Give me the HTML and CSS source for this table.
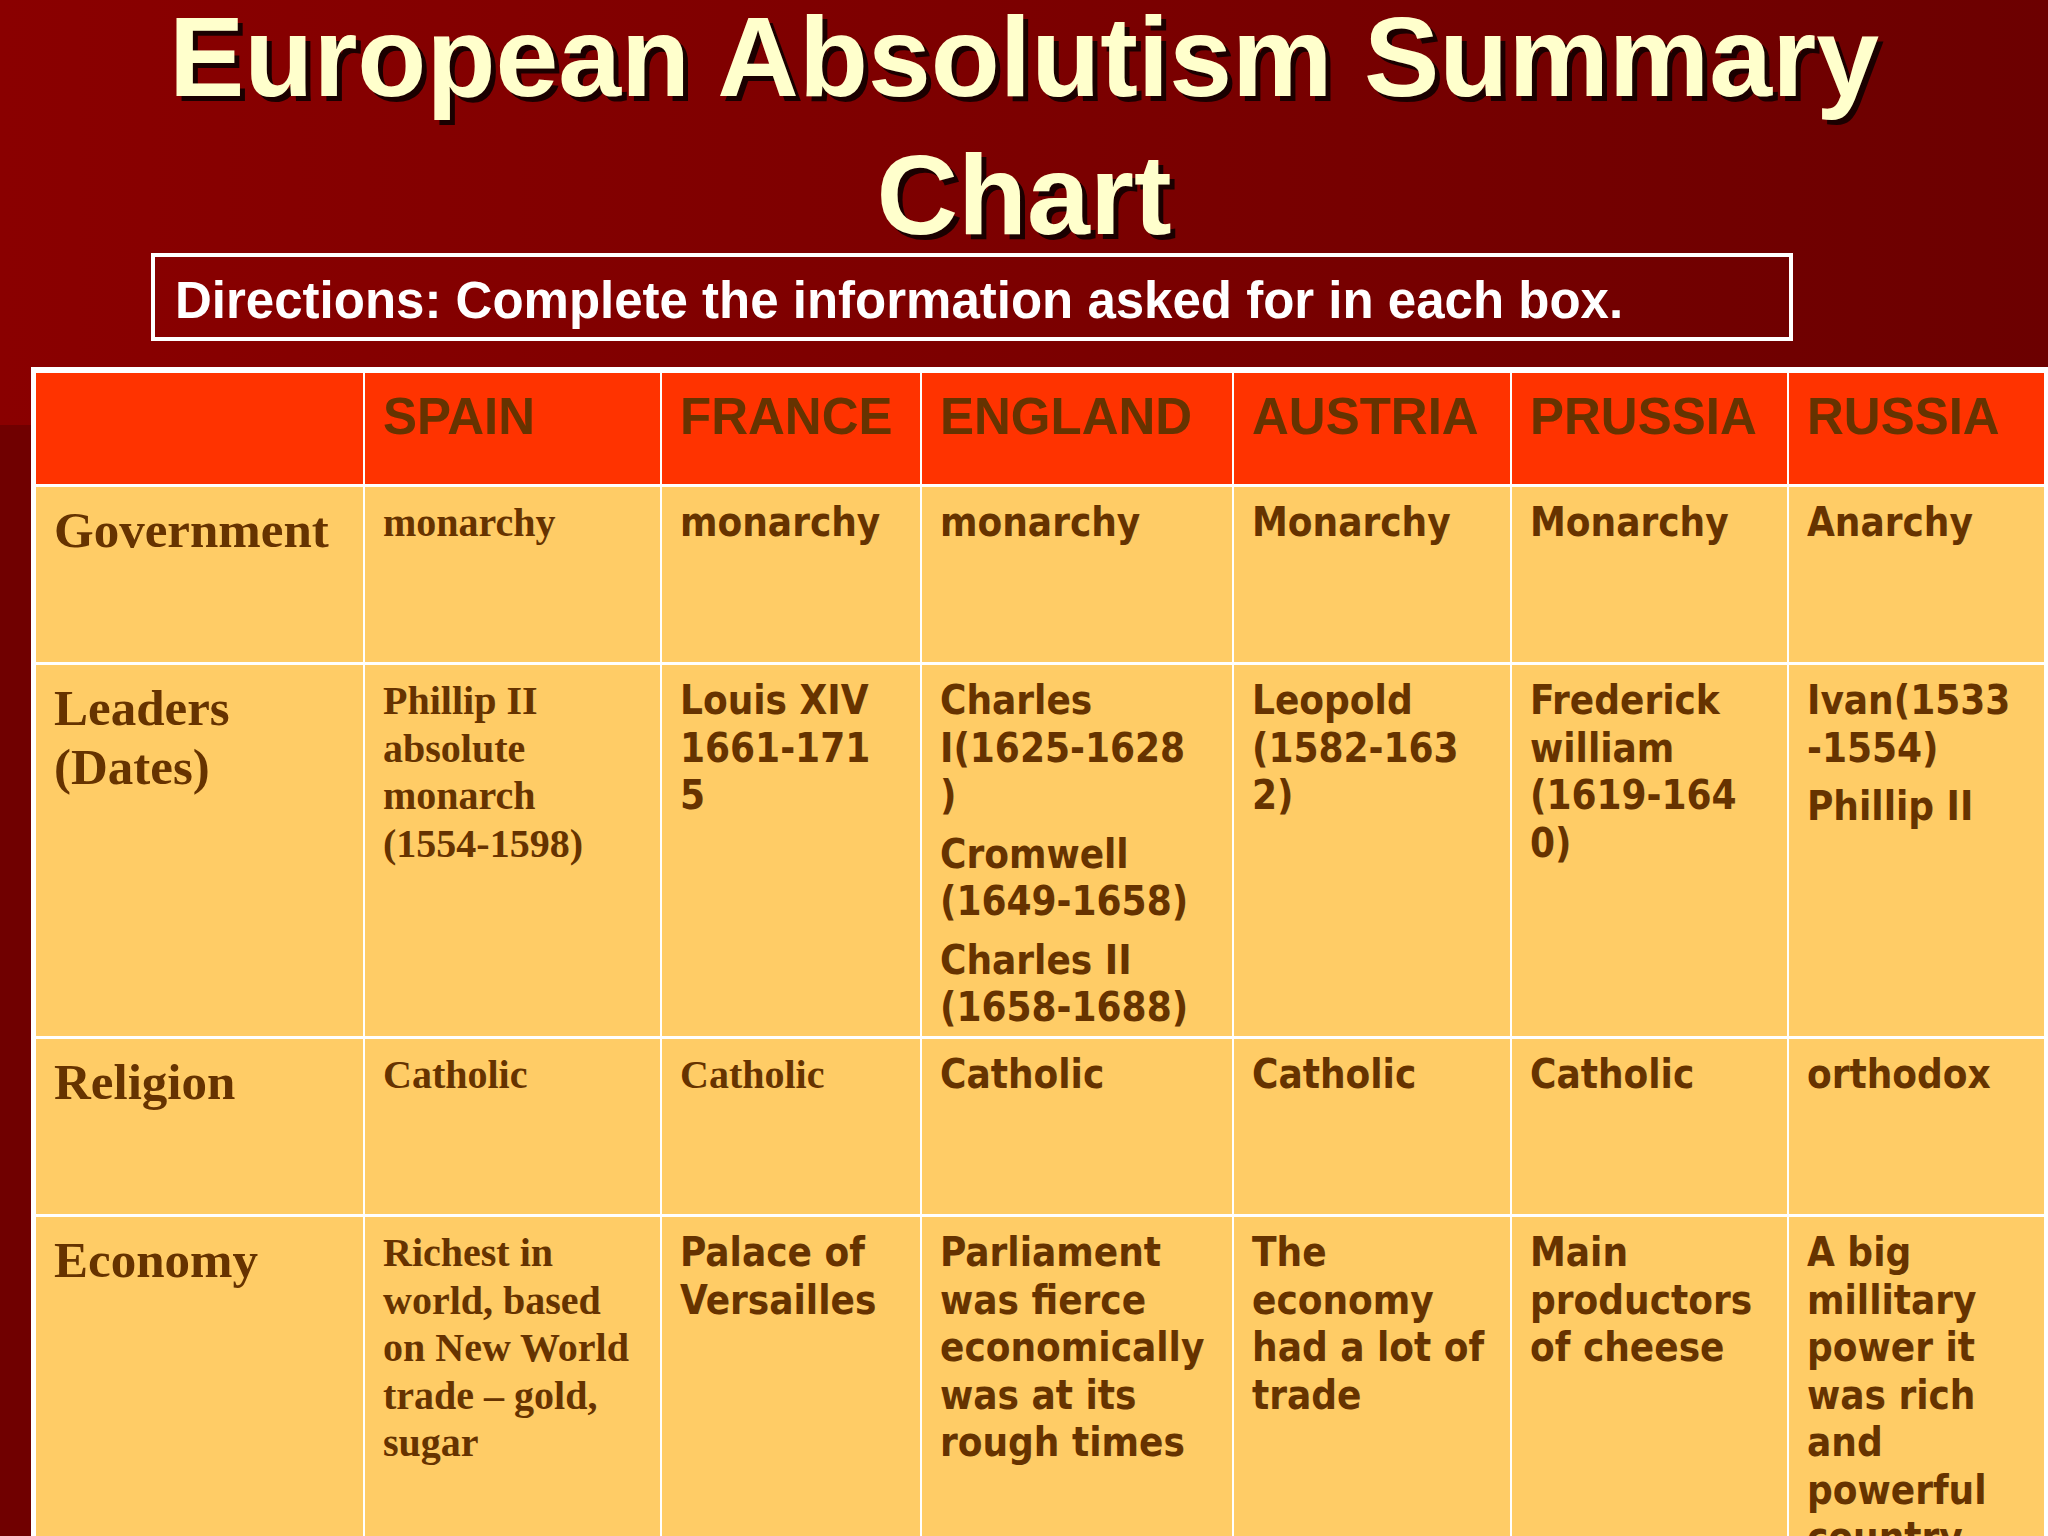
FILE: index.html
```html
<!DOCTYPE html>
<html lang="en">
<head>
<meta charset="utf-8">
<title>European Absolutism Summary Chart</title>
<link rel="stylesheet" href="styles.css">
</head>
<body>
<div class="slide">
  <h1 class="title">European Absolutism Summary<br>Chart</h1>
  <div class="directions">Directions: Complete the information asked for in each box.</div>
  <div class="chart">
    <div class="hd"></div>
    <div class="hd">SPAIN</div>
    <div class="hd">FRANCE</div>
    <div class="hd">ENGLAND</div>
    <div class="hd">AUSTRIA</div>
    <div class="hd">PRUSSIA</div>
    <div class="hd">RUSSIA</div>

    <div class="cell label">Government</div>
    <div class="cell serif">monarchy</div>
    <div class="cell sans">monarchy</div>
    <div class="cell sans">monarchy</div>
    <div class="cell sans">Monarchy</div>
    <div class="cell sans">Monarchy</div>
    <div class="cell sans">Anarchy</div>

    <div class="cell label">Leaders<br>(Dates)</div>
    <div class="cell serif">Phillip II<br>absolute<br>monarch<br>(1554-1598)</div>
    <div class="cell sans">Louis XIV<br>1661-171<br>5</div>
    <div class="cell sans"><p>Charles<br>I(1625-1628<br>)</p><p>Cromwell<br>(1649-1658)</p><p>Charles II<br>(1658-1688)</p></div>
    <div class="cell sans">Leopold<br>(1582-163<br>2)</div>
    <div class="cell sans">Frederick<br>william<br>(1619-164<br>0)</div>
    <div class="cell sans"><p>Ivan(1533<br>-1554)</p><p>Phillip II</p></div>

    <div class="cell label">Religion</div>
    <div class="cell serif">Catholic</div>
    <div class="cell serif">Catholic</div>
    <div class="cell sans">Catholic</div>
    <div class="cell sans">Catholic</div>
    <div class="cell sans">Catholic</div>
    <div class="cell sans">orthodox</div>

    <div class="cell label">Economy</div>
    <div class="cell serif">Richest in<br>world, based<br>on New World<br>trade – gold,<br>sugar</div>
    <div class="cell sans">Palace of<br>Versailles</div>
    <div class="cell sans">Parliament<br>was fierce<br>economically<br>was at its<br>rough times</div>
    <div class="cell sans">The<br>economy<br>had a lot of<br>trade</div>
    <div class="cell sans">Main<br>productors<br>of cheese</div>
    <div class="cell sans">A big<br>millitary<br>power it<br>was rich<br>and<br>powerful<br>country</div>
  </div>
</div>
</body>
</html>
```

FILE: styles.css
```css
html, body {
  margin: 0;
  padding: 0;
}

body {
  width: 2048px;
  height: 1536px;
  overflow: hidden;
  background: #7a0000;
}

.slide {
  width: 2048px;
  height: 1536px;
  overflow: hidden;
  display: flex;
  flex-direction: column;
  background:
    linear-gradient(#700000, #700000) no-repeat 0 425px / 31px 1111px,
    linear-gradient(to right, #8a0000 0%, #7c0000 50%, #6c0000 100%);
}

.slide > * {
  flex-shrink: 0;
}

.title {
  margin: -12px 0 -11px;
  font-family: "Liberation Sans", Arial, sans-serif;
  font-weight: bold;
  font-size: 113px;
  line-height: 138px;
  color: #ffffcc;
  text-align: center;
  text-shadow: 5px 5px 0 #1a0000;
}

.directions {
  box-sizing: border-box;
  margin-left: 151px;
  width: 1642px;
  height: 88px;
  padding: 14px 20px 0;
  border: 4px solid #ffffff;
  font-family: "Liberation Sans", Arial, sans-serif;
  font-weight: bold;
  font-size: 51px;
  color: #ffffff;
  white-space: nowrap;
}

.chart {
  margin: 26px 0 0 31px;
  align-self: flex-start;
  display: grid;
  grid-template-columns: 327px 295px 258px 310px 276px 275px 255px;
  grid-template-rows: 111px 175px 371px 175px 400px;
  gap: 3px 2px;
  padding: 6px 4px 0 5px;
  background: #ffffff;
}

.hd {
  background: #ff3300;
  color: #663300;
  font-family: "Liberation Sans", Arial, sans-serif;
  font-weight: bold;
  font-size: 51px;
  padding: 14px 18px 0;
  white-space: nowrap;
}

.cell {
  background: #ffcc66;
  color: #663300;
  font-weight: bold;
  font-size: 40px;
  line-height: 47.5px;
  padding: 12px 18px 0;
  white-space: nowrap;
  overflow: hidden;
}

.cell p {
  margin: 0;
}

.cell p + p {
  margin-top: 11px;
}

.serif {
  font-family: "Liberation Serif", "Times New Roman", serif;
}

.sans {
  font-family: "DejaVu Sans Condensed", "DejaVu Sans", Verdana, sans-serif;
  font-stretch: condensed;
}

.label {
  font-family: "Liberation Serif", "Times New Roman", serif;
  font-size: 51px;
  line-height: 59px;
  padding-top: 14px;
}
```
